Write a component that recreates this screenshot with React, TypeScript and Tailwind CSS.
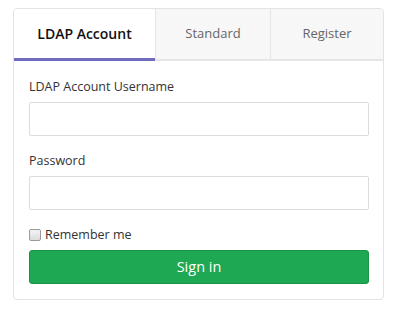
export default function App() {
  const tabs = [
    { label: 'LDAP Account', active: true, w: 'w-[141px]' },
    { label: 'Standard', active: false, w: 'w-[115px]' },
    { label: 'Register', active: false, w: 'flex-1' },
  ];

  return (
    <div className="min-h-screen bg-white pt-[8px] pl-[13px]" style={{ fontFamily: '"Open Sans", "Noto Sans", sans-serif' }}>
      <div className="w-[371px] h-[292px] border border-[#e3e3e3] rounded-[4px] overflow-hidden bg-white">
        <div className="flex h-[52px]">
          {tabs.map((t, i) => (
            <div
              key={t.label}
              className={
                t.active
                  ? `${t.w} flex items-center justify-center bg-white border-b-[3px] border-[#6f6cbd] text-[14px] font-semibold text-[#111]`
                  : `${t.w} flex items-center justify-center bg-[#f7f7f7] border-b-2 border-[#e6e6e6] text-[13px] text-[#666] ${i > 0 ? 'border-l border-l-[#e6e6e6]' : ''}`
              }
            >
              {t.label}
            </div>
          ))}
        </div>
        <form className="px-[15px] pt-[17px]" onSubmit={(e) => e.preventDefault()}>
          <label className="block text-[12.5px] text-[#333] leading-[18px]">LDAP Account Username</label>
          <input
            type="text"
            className="mt-[6px] block w-[340px] h-[34px] border border-[#dcdcdc] rounded-[2px] px-2 text-sm outline-none"
          />
          <label className="block mt-[16px] text-[12.5px] text-[#333] leading-[18px]">Password</label>
          <input
            type="password"
            className="mt-[6px] block w-[340px] h-[34px] border border-[#dcdcdc] rounded-[2px] px-2 text-sm outline-none"
          />
          <label className="mt-[16px] flex items-center gap-[4px] text-[12.5px] text-[#333] leading-[18px]">
            <span className="inline-block w-[12px] h-[12px] border border-[#9a9a9a] rounded-[2px] bg-gradient-to-b from-[#f3f3f3] to-[#dcdcdc]" />
            Remember me
          </label>
          <button
            type="submit"
            className="mt-[6px] block w-[340px] h-[34px] bg-[#1ea853] border border-[#199446] rounded-[3px] text-white text-[14.5px]"
          >
            Sign in
          </button>
        </form>
      </div>
    </div>
  );
}
